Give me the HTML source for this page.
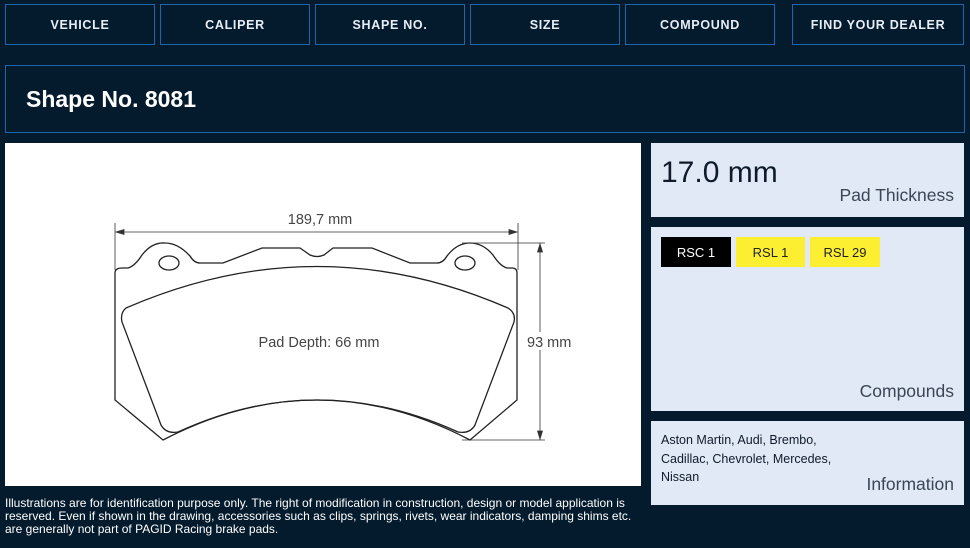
<!DOCTYPE html>
<html><head><meta charset="utf-8"><style>
*{margin:0;padding:0;box-sizing:border-box}
body{width:970px;height:548px;background:#041b2d;font-family:"Liberation Sans",sans-serif;position:relative;overflow:hidden;color:#fff}
.nav{position:absolute;top:4px;height:41px;border:1px solid #1c66ad;color:#e8eef6;font-size:12.5px;font-weight:bold;letter-spacing:0.7px;display:flex;align-items:center;justify-content:center}
.title{position:absolute;left:5px;top:65px;width:960px;height:68px;border:1px solid #1c66ad;font-size:23px;font-weight:bold;padding-left:20px;line-height:66px}
.img{position:absolute;left:5px;top:143px;width:636px;height:343px;background:#fff}
.box{position:absolute;left:651px;width:313px;background:#e2e9f6;color:#0d1b2a}
.lbl{position:absolute;right:10px;font-size:17.5px;color:#3a4656}
.b{position:absolute;top:237px;height:30px;font-size:13px;display:flex;align-items:center;justify-content:center}
.disc{position:absolute;left:5px;top:497px;font-size:12px;line-height:13px;color:#fff;white-space:nowrap;transform:scaleX(1.0);transform-origin:0 0}
</style></head><body>
<div class="nav" style="left:5px;width:150px">VEHICLE</div>
<div class="nav" style="left:160px;width:150px">CALIPER</div>
<div class="nav" style="left:315px;width:150px">SHAPE NO.</div>
<div class="nav" style="left:470px;width:150px">SIZE</div>
<div class="nav" style="left:625px;width:150px">COMPOUND</div>
<div class="nav" style="left:792px;width:172px">FIND YOUR DEALER</div>
<div class="title">Shape No. 8081</div>
<div class="img"></div>
<svg style="position:absolute;left:5px;top:143px" width="636" height="343" viewBox="5 143 636 343" font-family="Liberation Sans,sans-serif">
<g fill="none" stroke="#222" stroke-width="1.3">
<path d="M115,400 L115,273 Q115,268 122,268 L128,268 Q135,266 142,255 Q152,242 165,243 Q178,243 190,256 Q194,263 200,263 L223,263 L262,248 L300,248 L310,255 Q317,258 324,255 L333,248 L372,248 L410,263 L437,263 Q443,263 447,256 Q457,243 470,243 Q483,243 493,255 Q500,266 507,268 L512,268 Q517,268 517,273 L517,400 L470,440 Q317,360 163,440 Z"/>
<path d="M126,308 Q317,225 508,308 Q516,313 514,322 L475,425 Q470,434 458,432 Q317,368 178,432 Q166,434 161,425 L122,322 Q120,313 126,308 Z"/>
<ellipse cx="169" cy="263" rx="10" ry="7"/>
<ellipse cx="465" cy="263" rx="10" ry="7"/>
</g>
<g stroke="#333" stroke-width="0.8" fill="#333">
<line x1="115" y1="223" x2="115" y2="270"/><line x1="518" y1="223" x2="518" y2="270"/>
<line x1="116" y1="232" x2="517" y2="232"/>
<path d="M116,232 l8,-2.5 v5 z M517,232 l-8,-2.5 v5 z"/>
<line x1="462" y1="243" x2="545" y2="243"/><line x1="462" y1="440" x2="545" y2="440"/>
<line x1="540" y1="243" x2="540" y2="440"/>
<path d="M540,244 l-2.5,8 h5 z M540,439 l-2.5,-8 h5 z"/>
</g>
<rect x="526" y="332" width="48" height="18" fill="#fff"/>
<g fill="#444" font-size="14.5" stroke="none">
<text x="320" y="224" text-anchor="middle">189,7 mm</text>
<text x="319" y="347" text-anchor="middle">Pad Depth: 66 mm</text>
<text x="527" y="347">93 mm</text>
</g>
</svg>
<div class="box" style="top:143px;height:74px"><div style="position:absolute;left:10px;top:13px;font-size:30px">17.0 mm</div><div class="lbl" style="top:42px">Pad Thickness</div></div>
<div class="box" style="top:227px;height:184px"><div class="lbl" style="bottom:9px">Compounds</div></div>
<div class="b" style="left:661px;width:70px;background:#000;color:#fff">RSC 1</div>
<div class="b" style="left:736px;width:69px;background:#fcee30;color:#222">RSL 1</div>
<div class="b" style="left:810px;width:70px;background:#fcee30;color:#222">RSL 29</div>
<div class="box" style="top:421px;height:84px"><div style="position:absolute;left:10px;top:10px;font-size:12.5px;line-height:18.5px">Aston Martin, Audi, Brembo,<br>Cadillac, Chevrolet, Mercedes,<br>Nissan</div><div class="lbl" style="bottom:10px">Information</div></div>
<div class="disc">Illustrations are for identification purpose only. The right of modification in construction, design or model application is<br>reserved. Even if shown in the drawing, accessories such as clips, springs, rivets, wear indicators, damping shims etc.<br>are generally not part of PAGID Racing brake pads.</div>
</body></html>
